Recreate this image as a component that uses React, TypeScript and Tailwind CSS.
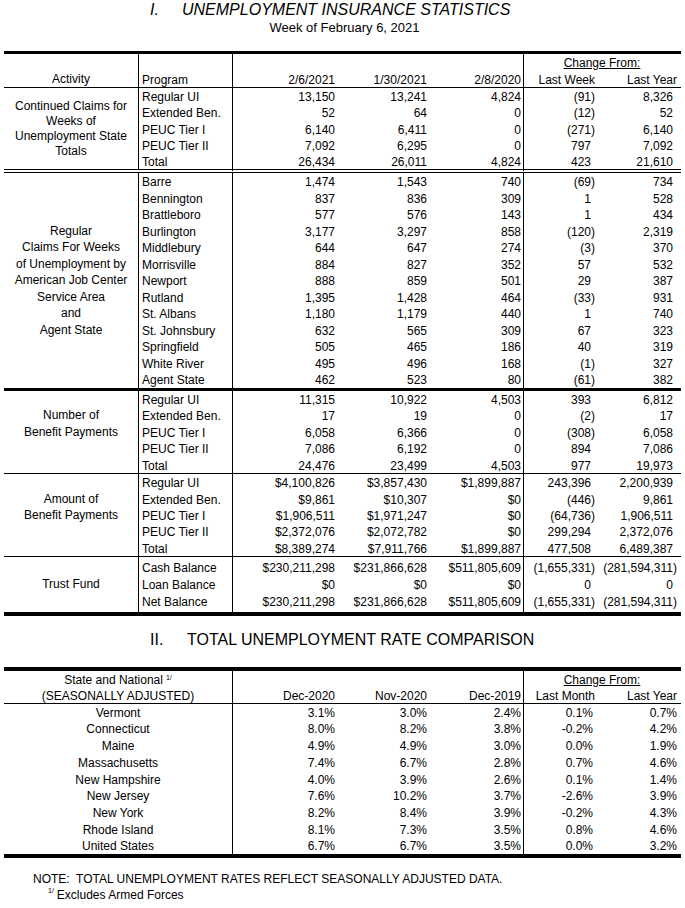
import React from 'react';

type Row = string[];

const SEC1: Row[] = [
  ['Regular UI', '13,150', '13,241', '4,824', '(91)', '8,326'],
  ['Extended Ben.', '52', '64', '0', '(12)', '52'],
  ['PEUC Tier I', '6,140', '6,411', '0', '(271)', '6,140'],
  ['PEUC Tier II', '7,092', '6,295', '0', '797', '7,092'],
  ['Total', '26,434', '26,011', '4,824', '423', '21,610'],
];

const SEC2: Row[] = [
  ['Barre', '1,474', '1,543', '740', '(69)', '734'],
  ['Bennington', '837', '836', '309', '1', '528'],
  ['Brattleboro', '577', '576', '143', '1', '434'],
  ['Burlington', '3,177', '3,297', '858', '(120)', '2,319'],
  ['Middlebury', '644', '647', '274', '(3)', '370'],
  ['Morrisville', '884', '827', '352', '57', '532'],
  ['Newport', '888', '859', '501', '29', '387'],
  ['Rutland', '1,395', '1,428', '464', '(33)', '931'],
  ['St. Albans', '1,180', '1,179', '440', '1', '740'],
  ['St. Johnsbury', '632', '565', '309', '67', '323'],
  ['Springfield', '505', '465', '186', '40', '319'],
  ['White River', '495', '496', '168', '(1)', '327'],
  ['Agent State', '462', '523', '80', '(61)', '382'],
];

const SEC3: Row[] = [
  ['Regular UI', '11,315', '10,922', '4,503', '393', '6,812'],
  ['Extended Ben.', '17', '19', '0', '(2)', '17'],
  ['PEUC Tier I', '6,058', '6,366', '0', '(308)', '6,058'],
  ['PEUC Tier II', '7,086', '6,192', '0', '894', '7,086'],
  ['Total', '24,476', '23,499', '4,503', '977', '19,973'],
];

const SEC4: Row[] = [
  ['Regular UI', '$4,100,826', '$3,857,430', '$1,899,887', '243,396', '2,200,939'],
  ['Extended Ben.', '$9,861', '$10,307', '$0', '(446)', '9,861'],
  ['PEUC Tier I', '$1,906,511', '$1,971,247', '$0', '(64,736)', '1,906,511'],
  ['PEUC Tier II', '$2,372,076', '$2,072,782', '$0', '299,294', '2,372,076'],
  ['Total', '$8,389,274', '$7,911,766', '$1,899,887', '477,508', '6,489,387'],
];

const SEC5: Row[] = [
  ['Cash Balance', '$230,211,298', '$231,866,628', '$511,805,609', '(1,655,331)', '(281,594,311)'],
  ['Loan Balance', '$0', '$0', '$0', '0', '0'],
  ['Net Balance', '$230,211,298', '$231,866,628', '$511,805,609', '(1,655,331)', '(281,594,311)'],
];

const RATES: Row[] = [
  ['Vermont', '3.1%', '3.0%', '2.4%', '0.1%', '0.7%'],
  ['Connecticut', '8.0%', '8.2%', '3.8%', '-0.2%', '4.2%'],
  ['Maine', '4.9%', '4.9%', '3.0%', '0.0%', '1.9%'],
  ['Massachusetts', '7.4%', '6.7%', '2.8%', '0.7%', '4.6%'],
  ['New Hampshire', '4.0%', '3.9%', '2.6%', '0.1%', '1.4%'],
  ['New Jersey', '7.6%', '10.2%', '3.7%', '-2.6%', '3.9%'],
  ['New York', '8.2%', '8.4%', '3.9%', '-0.2%', '4.3%'],
  ['Rhode Island', '8.1%', '7.3%', '3.5%', '0.8%', '4.6%'],
  ['United States', '6.7%', '6.7%', '3.5%', '0.0%', '3.2%'],
];

const GRID1 = 'grid grid-cols-[94px_104px_92px_95px_77px_80px]';
const GRID2 = 'grid grid-cols-[229px_104px_92px_95px_77px_80px]';

// accounting format: positive values leave room for the closing paren
const weekPad = (v: string) => (v.startsWith('(') ? 'pr-[6px]' : 'pr-[10px]');
const yearPad = (v: string) => (v.startsWith('(') ? 'pr-[4px]' : 'pr-[8px]');

const DataRow: React.FC<{ row: Row; h: string }> = ({ row, h }) => (
  <div className={`${GRID1} ${h}`}>
    <div className="flex items-center pl-[3px] border-r border-black whitespace-nowrap">{row[0]}</div>
    <div className="flex items-center justify-end pr-[2px]">{row[1]}</div>
    <div className="flex items-center justify-end pr-[2px]">{row[2]}</div>
    <div className="flex items-center justify-end pr-[2px] border-r border-black">{row[3]}</div>
    <div className={`flex items-center justify-end whitespace-nowrap ${weekPad(row[4])}`}>{row[4]}</div>
    <div className={`flex items-center justify-end whitespace-nowrap ${yearPad(row[5])}`}>{row[5]}</div>
  </div>
);

const Spacer: React.FC<{ h: string }> = ({ h }) => (
  <div className={`${GRID1} ${h}`}>
    <div className="border-r border-black" />
    <div />
    <div />
    <div className="border-r border-black" />
    <div />
    <div />
  </div>
);

const Section: React.FC<{
  top: string;
  activity: string[];
  rows: Row[];
  h: string;
  actClass: string;
  padTop?: boolean;
}> = ({ top, activity, rows, h, actClass, padTop }) => (
  <div className={`flex ${top}`}>
    <div className={`w-[135px] shrink-0 border-r border-black flex flex-col items-center text-center ${actClass}`}>
      {activity.map((l) => (
        <div key={l} className="whitespace-nowrap">{l}</div>
      ))}
    </div>
    <div className="flex-1">
      {padTop && <Spacer h="h-[2.5px]" />}
      {rows.map((r, i) => (
        <DataRow key={i} row={r} h={h} />
      ))}
      {padTop && <Spacer h="h-[2.5px]" />}
    </div>
  </div>
);

export default function App() {
  return (
    <div className="min-h-[908px] w-[685px] bg-white text-black text-[12px] font-['Liberation_Sans',Arial,sans-serif]">
      {/* Heading I */}
      <div className="flex pl-[150px] h-[20px] items-center text-[16px] italic">
        <span className="w-[32px]">I.</span>
        <span>UNEMPLOYMENT INSURANCE STATISTICS</span>
      </div>
      <div className="text-center text-[13px] leading-[16px] pl-[4px]">Week of February 6, 2021</div>

      {/* Table I */}
      <div className="ml-[4px] w-[677px] mt-[15px] border-t-[3px] border-b-4 border-black">
        {/* header */}
        <div className="flex border-b border-black">
          <div className="w-[135px] shrink-0 border-r border-black flex flex-col justify-end items-center h-[33px] leading-[16.5px]">
            Activity
          </div>
          <div className="flex-1">
            <div className={`${GRID1} h-[16.5px]`}>
              <div className="border-r border-black" />
              <div />
              <div />
              <div className="border-r border-black" />
              <div className="col-span-2 flex items-center justify-center pr-[1px]">
                <span className="underline underline-offset-[1px]">Change From:</span>
              </div>
            </div>
            <div className={`${GRID1} h-[16.5px]`}>
              <div className="flex items-center pl-[3px] border-r border-black">Program</div>
              <div className="flex items-center justify-end pr-[2px]">2/6/2021</div>
              <div className="flex items-center justify-end pr-[2px]">1/30/2021</div>
              <div className="flex items-center justify-end pr-[2px] border-r border-black">2/8/2020</div>
              <div className="flex items-center justify-end pr-[6px]">Last Week</div>
              <div className="flex items-center justify-end pr-[4px]">Last Year</div>
            </div>
          </div>
        </div>

        <Section
          top=""
          activity={['Continued Claims for', 'Weeks of', 'Unemployment State', 'Totals']}
          rows={SEC1}
          h="h-[16.3px]"
          actClass="justify-center leading-[15px] pt-[1px]"
        />
        <Section
          top="border-t-4 border-double border-black"
          activity={['Regular', 'Claims For Weeks', 'of Unemployment by', 'American Job Center', 'Service Area', 'and', 'Agent State']}
          rows={SEC2}
          h="h-[16.5px]"
          actClass="justify-center leading-[16.5px]"
        />
        <Section
          top="border-t-[3px] border-black"
          activity={['Number of', 'Benefit Payments']}
          rows={SEC3}
          h="h-[16.5px]"
          actClass="justify-start leading-[16.5px] pt-[16.5px]"
        />
        <Section
          top="border-t border-black"
          activity={['Amount of', 'Benefit Payments']}
          rows={SEC4}
          h="h-[16.3px]"
          actClass="justify-start leading-[16.3px] pt-[16.3px]"
        />
        <Section
          top="border-t border-black"
          activity={['Trust Fund']}
          rows={SEC5}
          h="h-[16.6px]"
          actClass="justify-center leading-[16.6px]"
          padTop
        />
      </div>

      {/* Heading II */}
      <div className="flex pl-[150px] h-[20px] items-center text-[16px] mt-[14px]">
        <span className="w-[37px]">II.</span>
        <span>TOTAL UNEMPLOYMENT RATE COMPARISON</span>
      </div>

      {/* Table II */}
      <div className="ml-[4px] w-[677px] mt-[17px] border-t-4 border-b-4 border-black">
        <div className="border-b border-black">
          <div className={`${GRID2} h-[16px]`}>
            <div className="flex items-center justify-center border-r border-black">
              <span>
                State and National
                <sup className="text-[7px] ml-[3px]">1/</sup>
              </span>
            </div>
            <div />
            <div />
            <div className="border-r border-black" />
            <div className="col-span-2 flex items-center justify-center pr-[1px]">
              <span className="underline underline-offset-[1px]">Change From:</span>
            </div>
          </div>
          <div className={`${GRID2} h-[16px]`}>
            <div className="flex items-center justify-center border-r border-black">(SEASONALLY ADJUSTED)</div>
            <div className="flex items-center justify-end pr-[2px]">Dec-2020</div>
            <div className="flex items-center justify-end pr-[2px]">Nov-2020</div>
            <div className="flex items-center justify-end pr-[2px] border-r border-black">Dec-2019</div>
            <div className="flex items-center justify-end pr-[6px]">Last Month</div>
            <div className="flex items-center justify-end pr-[4px]">Last Year</div>
          </div>
        </div>
        {RATES.map((r) => (
          <div key={r[0]} className={`${GRID2} h-[16.7px]`}>
            <div className="flex items-center justify-center border-r border-black">{r[0]}</div>
            <div className="flex items-center justify-end pr-[2px]">{r[1]}</div>
            <div className="flex items-center justify-end pr-[2px]">{r[2]}</div>
            <div className="flex items-center justify-end pr-[2px] border-r border-black">{r[3]}</div>
            <div className="flex items-center justify-end pr-[8px]">{r[4]}</div>
            <div className="flex items-center justify-end pr-[4px]">{r[5]}</div>
          </div>
        ))}
      </div>

      {/* Notes */}
      <div className="mt-[13px] pl-[33px] leading-[16px]">
        NOTE:&nbsp; TOTAL UNEMPLOYMENT RATES REFLECT SEASONALLY ADJUSTED DATA.
      </div>
      <div className="pl-[48px] leading-[16px] flex items-center">
        <sup className="text-[7px] mr-[3px]">1/</sup>
        <span>Excludes Armed Forces</span>
      </div>
    </div>
  );
}
